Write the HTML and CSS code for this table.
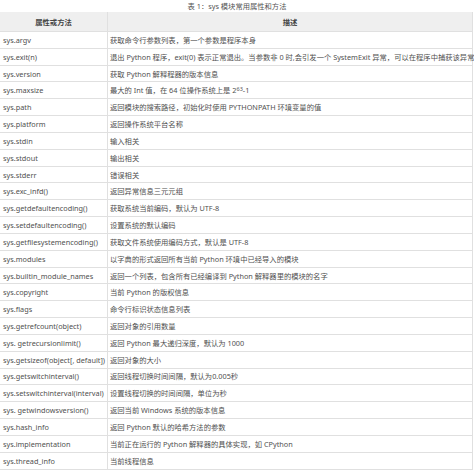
FILE: index.html
```html
<!DOCTYPE html>
<html lang="zh">
<head>
<meta charset="utf-8">
<link rel="stylesheet" href="styles.css">
</head>
<body>
<div class="caption">表 1：sys 模块常用属性和方法</div>
<div class="table">
  <div class="cell head">属性或方法</div><div class="cell head">描述</div>
  <div class="cell">sys.argv</div><div class="cell">获取命令行参数列表，第一个参数是程序本身</div>
  <div class="cell">sys.exit(n)</div><div class="cell">退出 Python 程序，exit(0) 表示正常退出。当参数非 0 时,会引发一个 SystemExit 异常，可以在程序中捕获该异常</div>
  <div class="cell">sys.version</div><div class="cell">获取 Python 解释程器的版本信息</div>
  <div class="cell">sys.maxsize</div><div class="cell">最大的 Int 值，在 64 位操作系统上是 2<sup>63</sup>-1</div>
  <div class="cell">sys.path</div><div class="cell">返回模块的搜索路径，初始化时使用 PYTHONPATH 环境变量的值</div>
  <div class="cell">sys.platform</div><div class="cell">返回操作系统平台名称</div>
  <div class="cell">sys.stdin</div><div class="cell">输入相关</div>
  <div class="cell">sys.stdout</div><div class="cell">输出相关</div>
  <div class="cell">sys.stderr</div><div class="cell">错误相关</div>
  <div class="cell">sys.exc_infd()</div><div class="cell">返回异常信息三元元组</div>
  <div class="cell">sys.getdefaultencoding()</div><div class="cell">获取系统当前编码，默认为 UTF-8</div>
  <div class="cell">sys.setdefaultencoding()</div><div class="cell">设置系统的默认编码</div>
  <div class="cell">sys.getfilesystemencoding()</div><div class="cell">获取文件系统使用编码方式，默认是 UTF-8</div>
  <div class="cell">sys.modules</div><div class="cell">以字典的形式返回所有当前 Python 环境中已经导入的模块</div>
  <div class="cell">sys.builtin_module_names</div><div class="cell">返回一个列表，包含所有已经编译到 Python 解释器里的模块的名字</div>
  <div class="cell">sys.copyright</div><div class="cell">当前 Python 的版权信息</div>
  <div class="cell">sys.flags</div><div class="cell">命令行标识状态信息列表</div>
  <div class="cell">sys.getrefcount(object)</div><div class="cell">返回对象的引用数量</div>
  <div class="cell">sys. getrecursionlimit()</div><div class="cell">返回 Python 最大递归深度，默认为 1000</div>
  <div class="cell">sys.getsizeof(object[, default])</div><div class="cell">返回对象的大小</div>
  <div class="cell">sys.getswitchinterval()</div><div class="cell">返回线程切换时间间隔，默认为0.005秒</div>
  <div class="cell">sys.setswitchinterval(interval)</div><div class="cell">设置线程切换的时间间隔，单位为秒</div>
  <div class="cell">sys. getwindowsversion()</div><div class="cell">返回当前 Windows 系统的版本信息</div>
  <div class="cell">sys.hash_info</div><div class="cell">返回 Python 默认的哈希方法的参数</div>
  <div class="cell">sys.implementation</div><div class="cell">当前正在运行的 Python 解释器的具体实现，如 CPython</div>
  <div class="cell">sys.thread_info</div><div class="cell">当前线程信息</div>
</div>
</body>
</html>
```

FILE: styles.css
```css
html, body {
  margin: 0;
  padding: 0;
  background: #ffffff;
}
body {
  font-family: "Noto Sans", "Noto Sans CJK SC", sans-serif;
  font-size: 7.3px;
  color: #505050;
  width: 474px;
  overflow: hidden;
}
.caption {
  height: 12px;
  line-height: 13px;
  text-align: center;
  color: #555555;
}
.table {
  display: grid;
  grid-template-columns: 108px 365px;
  grid-template-rows: 20px;
  grid-auto-rows: 16.83px;
  width: 473px;
}
.cell {
  box-sizing: border-box;
  border-right: 1px solid #e0e0e0;
  border-bottom: 1px solid #e0e0e0;
  padding-left: 3px;
  display: flex;
  align-items: center;
  white-space: nowrap;
  overflow: visible;
  background: #ffffff;
}
.cell:nth-child(2n) {
  padding-left: 2px;
}
.cell.head {
  background: #efefef;
  justify-content: center;
  font-weight: 600;
  color: #444444;
  padding-left: 0;
}
sup {
  font-size: 5.5px;
  line-height: 0;
  position: relative;
  top: -1px;
}
```
